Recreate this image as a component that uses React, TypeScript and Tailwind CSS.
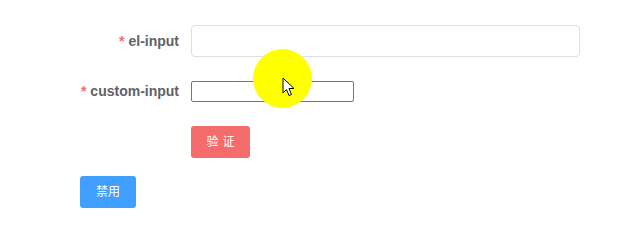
import React from "react";

export default function App() {
  return (
    <div className="relative w-[640px] h-[240px] bg-white overflow-hidden" style={{ fontFamily: '"Liberation Sans", Arial, "Noto Sans CJK SC", sans-serif' }}>
      <div className="pt-[25px]">
        {/* el-input */}
        <div className="flex items-center h-[32px]">
          <label className="w-[179px] text-right text-[14px] font-bold text-[#606266]">
            <span className="text-[#f56c6c] mr-[4px]">*</span>el-input
          </label>
          <input className="ml-[12px] w-[389px] h-[32px] border border-[#dcdfe6] rounded-[4px] outline-none" />
        </div>

        {/* custom-input */}
        <div className="flex items-center h-[32px] mt-[18px]">
          <label className="w-[179px] text-right text-[14px] font-bold text-[#606266]">
            <span className="text-[#f56c6c] mr-[4px]">*</span>custom-input
          </label>
          <input className="ml-[12px] w-[163px] h-[21px] border border-[#767676] rounded-[2px] outline-none" />
        </div>

        <div className="mt-[19px] pl-[191px]">
          <button className="w-[59px] h-[32px] rounded-[3px] bg-[#f56c6c] text-white text-[12px] tracking-[4px] pl-[4px]">
            验证
          </button>
        </div>

        <div className="mt-[18px] pl-[80px]">
          <button className="w-[56px] h-[32px] rounded-[3px] bg-[#409eff] text-white text-[12px]">
            禁用
          </button>
        </div>
      </div>

      {/* cursor highlight */}
      <div className="absolute left-[253px] top-[49px] w-[59px] h-[59px] rounded-full bg-[#ffff00]" />
      <svg className="absolute left-[282px] top-[77px]" width="13" height="20" viewBox="0 0 13 20">
        <path d="M1 1 L1 16 L4.5 12.5 L7 18.5 L9.5 17.5 L7 11.5 L12 11.5 Z" fill="#fff" stroke="#000" strokeWidth="1" strokeLinejoin="round" />
      </svg>
    </div>
  );
}
